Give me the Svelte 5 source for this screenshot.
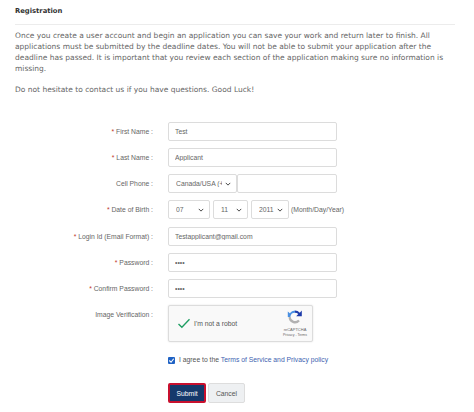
<script>
  let code = $state('+1');
  let month = $state('07');
  let day = $state('11');
  let year = $state('2011');
</script>

<div class="page">
  <h1>Registration</h1>
  <div class="intro">
    <p>Once you create a user account and begin an application you can save your work and return later to finish. All applications must be submitted by the deadline dates. You will not be able to submit your application after the deadline has passed. It is important that you review each section of the application making sure no information is missing.</p>
    <p>Do not hesitate to contact us if you have questions. Good Luck!</p>
  </div>

  <form class="form">
    <label class="lbl" for="first"><span class="req">*</span> First Name :</label>
    <input id="first" class="field" value="Test" />

    <label class="lbl" for="last"><span class="req">*</span> Last Name :</label>
    <input id="last" class="field" value="Applicant" />

    <label class="lbl" for="phone">Cell Phone :</label>
    <div class="phone">
      <select class="sel code" bind:value={code} aria-label="Country code">
        <option value="+1">Canada/USA (+1)</option>
      </select>
      <input id="phone" class="field" />
    </div>

    <div class="lbl"><span class="req">*</span> Date of Birth :</div>
    <div class="dob">
      <select class="sel mm" bind:value={month} aria-label="Month"><option>07</option></select>
      <select class="sel dd" bind:value={day} aria-label="Day"><option>11</option></select>
      <select class="sel yy" bind:value={year} aria-label="Year"><option>2011</option></select>
      <span class="hint">(Month/Day/Year)</span>
    </div>

    <label class="lbl" for="login"><span class="req">*</span> Login Id (Email Format) :</label>
    <input id="login" class="field" value="Testapplicant@gmail.com" />

    <label class="lbl" for="pw"><span class="req">*</span> Password :</label>
    <input id="pw" class="field" type="password" value="Test" />

    <label class="lbl" for="pw2"><span class="req">*</span> Confirm Password :</label>
    <input id="pw2" class="field" type="password" value="Test" />

    <div class="lbl captcha-lbl">Image Verification :</div>
    <div class="captcha">
      <svg class="tick" viewBox="0 0 16 13"><path d="M1.500 7l4 4 9-9.500" /></svg>
      <span class="robot">I'm not a robot</span>
      <div class="brand">
        <svg viewBox="0 0 20 20">
          <path d="M10 2a8 8 0 0 1 6 2.700L18.500 2v7h-7l2.600-2.600A5.400 5.400 0 0 0 10 4.600z" fill="#1c3aa9" />
          <path d="M10 2a8 8 0 0 0-6.500 3.300L1 3v7h3.200a5.800 5.800 0 0 1 5.800-5.400z" fill="#4a90e2" />
          <path d="M2 10a8 8 0 0 0 14 5.300l-2-2A5.400 5.400 0 0 1 4.600 10z" fill="#b1b1b1" />
        </svg>
        <span class="re">reCAPTCHA</span>
        <span class="terms">Privacy - Terms</span>
      </div>
    </div>

    <div class="agree">
      <span class="check"><svg viewBox="0 0 8 8"><path d="M1.500 4l2 2 3-4" /></svg></span>
      <span>I agree to the <span class="link">Terms of Service and Privacy policy</span></span>
    </div>

    <div class="actions">
      <button type="button" class="submit">Submit</button>
      <button type="button" class="cancel">Cancel</button>
    </div>
  </form>
</div>

<style>
  :global(body) {
    margin: 0;
    background: #fff;
  }

  .page {
    width: 440px;
    height: 412px;
    padding: 7px 19px 0 15px;
    overflow: hidden;
    font-family: "Liberation Sans", Arial, sans-serif;
    color: #555;
  }

  h1 {
    margin: 0;
    padding-bottom: 9px;
    border-bottom: 1px solid #ececec;
    font-size: 6.800px;
    line-height: 8px;
    font-weight: 700;
    font-family: "DejaVu Sans", sans-serif;
    color: #333;
  }

  .intro {
    padding-top: 6px;
    font-family: "DejaVu Sans", sans-serif;
    font-size: 7.500px;
    line-height: 10.900px;
    color: #666;
  }

  .intro p {
    margin: 0 0 10px;
  }

  .form {
    display: grid;
    grid-template-columns: 139px 169px;
    column-gap: 14px;
    row-gap: 7.300px;
    margin-top: 26px;
    align-items: center;
    font-size: 6.800px;
  }

  .lbl {
    text-align: right;
    padding-right: 1px;
    color: #666;
  }

  .req {
    color: #c0392b;
  }

  .field {
    width: 100%;
    height: 19px;
    box-sizing: border-box;
    padding: 0 6px;
    border: 1px solid #dcdcdc;
    border-radius: 2px;
    background: #fff;
    font: 6.800px "Liberation Sans", Arial, sans-serif;
    color: #666;
    outline: none;
  }

  .phone {
    display: flex;
  }

  .phone .field {
    flex: 1;
    min-width: 0;
  }

  .sel {
    flex: none;
    appearance: none;
    height: 19px;
    box-sizing: border-box;
    padding: 0 14px 0 7px;
    border: 1px solid #dcdcdc;
    border-radius: 2px;
    background: #fff url("data:image/svg+xml,%3Csvg xmlns='http://www.w3.org/2000/svg' viewBox='0 0 8 5'%3E%3Cpath d='M1 1l3 3 3-3' fill='none' stroke='%23444' stroke-width='1.300'/%3E%3C/svg%3E") no-repeat right 5px center / 6px 4px;
    font: 6.800px "Liberation Sans", Arial, sans-serif;
    color: #666;
  }

  .code {
    width: 69px;
  }

  .dob {
    display: flex;
    align-items: center;
    gap: 3px;
    white-space: nowrap;
  }

  .mm {
    width: 42px;
  }

  .dd {
    width: 35px;
  }

  .yy {
    width: 38px;
  }

  .hint {
    margin-left: -1px;
    color: #666;
  }

  .captcha-lbl {
    align-self: start;
    padding-top: 5px;
  }

  .captcha {
    display: flex;
    align-items: center;
    width: 145px;
    height: 37px;
    box-sizing: border-box;
    margin-top: -1px;
    padding: 0 5px 0 8px;
    border: 1px solid #dcdcdc;
    border-radius: 2px;
    background: #f9f9f9;
    box-shadow: 0 0 2px rgba(0, 0, 0, 0.12);
  }

  .tick {
    width: 14px;
    height: 11px;
    fill: none;
    stroke: #1f9e63;
    stroke-width: 1.600;
    margin-right: 3px;
  }

  .robot {
    flex: 1;
    color: #555;
  }

  .brand {
    display: flex;
    flex-direction: column;
    align-items: center;
    color: #666;
  }

  .brand svg {
    width: 16px;
    height: 16px;
  }

  .re {
    font-size: 4px;
    margin-top: 2px;
  }

  .terms {
    font-size: 3.500px;
    margin-top: 1px;
  }

  .agree {
    grid-column: 2;
    display: flex;
    align-items: center;
    gap: 4px;
    margin-top: 7px;
    white-space: nowrap;
    color: #555;
  }

  .check {
    display: flex;
    width: 7px;
    height: 7px;
    margin-top: 1px;
    border-radius: 1px;
    background: #1f62c4;
  }

  .check svg {
    fill: none;
    stroke: #fff;
    stroke-width: 1.300;
  }

  .link {
    color: #3e5fb0;
  }

  .actions {
    grid-column: 2;
    display: flex;
    gap: 2px;
    margin-top: 12px;
  }

  .actions button {
    height: 20px;
    padding: 0;
    border-radius: 2px;
    font: 6.800px "Liberation Sans", Arial, sans-serif;
  }

  .submit {
    width: 38px;
    border: 2px solid #c8102e;
    background: #15396b;
    color: #fff;
  }

  .cancel {
    width: 37px;
    border: 1px solid #ddd;
    background: #eef0f2;
    color: #555;
  }
</style>
